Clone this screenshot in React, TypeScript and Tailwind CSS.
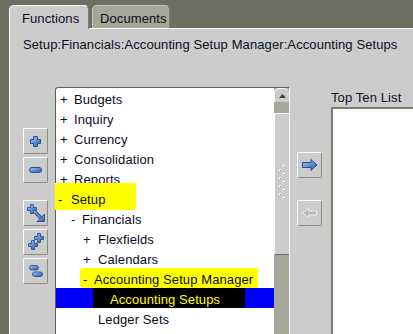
import React from "react";

type Row = {
  pl: string;
  signW: string;
  sign?: string;
  text: string;
  mark?: "setup" | "manager" | "selected";
};

const rows: Row[] = [
  { pl: "pl-[4px]", signW: "w-[14px]", sign: "+", text: "Budgets" },
  { pl: "pl-[4px]", signW: "w-[14px]", sign: "+", text: "Inquiry" },
  { pl: "pl-[4px]", signW: "w-[14px]", sign: "+", text: "Currency" },
  { pl: "pl-[4px]", signW: "w-[14px]", sign: "+", text: "Consolidation" },
  { pl: "pl-[4px]", signW: "w-[14px]", sign: "+", text: "Reports" },
  { pl: "pl-[2px]", signW: "w-[13px]", sign: "-", text: "Setup", mark: "setup" },
  { pl: "pl-[15px]", signW: "w-[11px]", sign: "-", text: "Financials" },
  { pl: "pl-[27px]", signW: "w-[15px]", sign: "+", text: "Flexfields" },
  { pl: "pl-[27px]", signW: "w-[15px]", sign: "+", text: "Calendars" },
  { pl: "pl-[27px]", signW: "w-[11px]", sign: "-", text: "Accounting Setup Manager", mark: "manager" },
  { pl: "pl-[54px]", signW: "w-0", text: "Accounting Setups", mark: "selected" },
  { pl: "pl-[42px]", signW: "w-0", text: "Ledger Sets" },
];

function ToolButton({ children }: { children: React.ReactNode }) {
  return (
    <div className="h-[26px] w-[25px] rounded-[2px] bg-[#cccccc] border border-t-white border-l-white border-b-[#8a8d7c] border-r-[#8a8d7c] flex items-center justify-center">
      {children}
    </div>
  );
}

function BlueGrad({ id }: { id: string }) {
  return (
    <defs>
      <linearGradient id={id} x1="0" y1="0" x2="1" y2="1">
        <stop offset="0" stopColor="#a9c8f2" />
        <stop offset="0.5" stopColor="#5f8fd6" />
        <stop offset="1" stopColor="#2f5ea8" />
      </linearGradient>
    </defs>
  );
}

const plus = (x: number, y: number) =>
  `M${x + 3} ${y}h3v3h3v3h-3v3h-3v-3h-3v-3h3z`;

export default function App() {
  return (
    <div className="w-[413px] h-[334px] overflow-hidden bg-[#6b7060] flex flex-col font-['Liberation_Sans',Arial,sans-serif] text-[13px] leading-[15px] tracking-[0.1px] text-[#0c0c24]">
      {/* tabs */}
      <div className="flex h-[29px] pl-[9px] shrink-0">
        <div className="mt-[5px] w-[80px] bg-[#cccccc] rounded-t-[5px] border-t border-l border-white border-r border-r-[#7d806f] pl-[12px] pt-[5px]">
          Functions
        </div>
        <div className="flex-1 flex border-b border-white">
          <div className="mt-[5px] ml-[3px] w-[78px] bg-[#a5a898] rounded-t-[5px] border-t border-l border-[#c4c6b6] border-r border-r-[#7d806f] pl-[7px] pt-[5px]">
            Documents
          </div>
        </div>
      </div>

      {/* panel */}
      <div className="flex-1 ml-[9px] bg-[#cccccc] border-l border-white pl-[13px] pt-[8px]">
        <div className="whitespace-nowrap">Setup:Financials:Accounting Setup Manager:Accounting Setups</div>

        <div className="flex items-start mt-[35px]">
          {/* tree buttons */}
          <div className="flex flex-col mt-[41px] w-[25px]">
            <div className="flex flex-col gap-[3px]">
              <ToolButton>
                <svg width="11" height="11" viewBox="0 0 11 11">
                  <BlueGrad id="g1" />
                  <path d="M3.5 0.5h4v3h3v4h-3v3h-4v-3h-3v-4h3z" fill="url(#g1)" stroke="#2b4f8f" />
                </svg>
              </ToolButton>
              <ToolButton>
                <svg width="13" height="6" viewBox="0 0 13 6">
                  <BlueGrad id="g2" />
                  <rect x="0.5" y="0.5" width="12" height="5" rx="2.5" fill="url(#g2)" stroke="#2b4f8f" />
                </svg>
              </ToolButton>
            </div>
            <div className="flex flex-col gap-[3px] mt-[17px]">
              <ToolButton>
                <svg width="20" height="20" viewBox="0 0 20 20">
                  <BlueGrad id="g3" />
                  <path d="M9 9l6 6" stroke="#2b4f8f" strokeWidth="3.4" />
                  <path d="M9 9l6 6" stroke="#6a98dc" strokeWidth="1.6" />
                  <path d="M18.5 18.5h-7.5l7.5-7.5z" fill="url(#g3)" stroke="#2b4f8f" strokeWidth="0.9" />
                  <path d={plus(1.5, 1.5)} fill="url(#g3)" stroke="#2b4f8f" strokeWidth="0.9" />
                </svg>
              </ToolButton>
              <ToolButton>
                <svg width="20" height="20" viewBox="0 0 20 20">
                  <BlueGrad id="g4" />
                  <path d={plus(8.5, 1.5)} fill="url(#g4)" stroke="#2b4f8f" strokeWidth="0.9" />
                  <path d={plus(2.5, 8.5)} fill="url(#g4)" stroke="#2b4f8f" strokeWidth="0.9" />
                </svg>
              </ToolButton>
              <ToolButton>
                <svg width="20" height="20" viewBox="0 0 20 20">
                  <BlueGrad id="g5" />
                  <rect x="3.5" y="4.5" width="9" height="4.5" rx="2.2" fill="url(#g5)" stroke="#2b4f8f" strokeWidth="0.9" />
                  <rect x="6.5" y="11" width="10" height="4.5" rx="2.2" fill="url(#g5)" stroke="#2b4f8f" strokeWidth="0.9" />
                </svg>
              </ToolButton>
            </div>
          </div>

          {/* tree */}
          <div className="ml-[7px] w-[235px] h-[250px] flex bg-white border-l border-t border-[#5f6252] border-r border-r-white rounded-tl-[3px]">
            <div className="flex-1 pt-[2px]">
              {rows.map((r) => (
                <div key={r.text} className={`relative h-[20px] leading-[20px] flex whitespace-nowrap ${r.pl}`}>
                  {r.mark === "setup" && <span className="absolute left-[-1px] top-[-7px] w-[81px] h-[27px] bg-[#ffff00] rounded-br-[3px]" />}
                  {r.mark === "manager" && <span className="absolute left-[24px] top-[-2px] w-[178px] h-[20px] bg-[#ffff00] rounded-l-[4px]" />}
                  {r.mark === "selected" && (
                    <span className="absolute left-0 right-0 top-[-2px] h-[20px] bg-[#0000ff]">
                      <span className="absolute left-[37px] top-0 w-[152px] h-[20px] bg-black" />
                    </span>
                  )}
                  <span className={`relative ${r.signW}`}>{r.sign}</span>
                  <span className={`relative ${r.mark === "selected" ? "text-[#ffff00]" : ""}`}>{r.text}</span>
                </div>
              ))}
            </div>
            {/* scrollbar */}
            <div className="w-[15px] flex flex-col bg-[#a5a898]">
              <div className="h-[14px] bg-[#cccccc] rounded-t-[5px] border-t border-l border-white flex items-center justify-center">
                <svg width="7" height="4" viewBox="0 0 7 4">
                  <path d="M0 4L3.5 0L7 4z" fill="#3c3c3c" />
                </svg>
              </div>
              <div className="h-[11px]" />
              <div className="h-[142px] bg-[#cccccc] border-t border-l border-white border-b border-b-[#6b7060] flex justify-center pt-[51px]">
                <svg width="13" height="34" viewBox="0 0 13 34">
                  {Array.from({ length: 9 }).map((_, i) => (
                    <g key={i}>
                      <rect x={i % 2 === 0 ? 7 : 3} y={i * 4} width="2" height="2" fill="#ffffff" />
                      <rect x={i % 2 === 0 ? 8 : 4} y={i * 4 + 1} width="1" height="1" fill="#8f9282" />
                    </g>
                  ))}
                </svg>
              </div>
            </div>
          </div>

          {/* move buttons */}
          <div className="ml-[7px] w-[26px] mt-[65px] flex flex-col gap-[22px]">
            <ToolButton>
              <svg width="16" height="12" viewBox="0 0 16 12">
                <BlueGrad id="g6" />
                <path d="M0.5 3.5h8.5v-3l6 5.5-6 5.5v-3h-8.5z" fill="url(#g6)" stroke="#2b4f8f" />
              </svg>
            </ToolButton>
            <ToolButton>
              <svg width="15" height="10" viewBox="0 0 15 10">
                <path d="M14.5 3h-8v-2.5l-6 4.5 6 4.5v-2.5h8z" fill="#b9bab4" stroke="#ececec" />
              </svg>
            </ToolButton>
          </div>

          {/* top ten */}
          <div className="ml-[8px] flex-1 flex flex-col">
            <div className="mt-[3px] whitespace-nowrap">Top Ten List</div>
            <div className="mt-[2px] h-[240px] bg-white border-l-2 border-t-2 border-[#7b7e6d]" />
          </div>
        </div>
      </div>
    </div>
  );
}
